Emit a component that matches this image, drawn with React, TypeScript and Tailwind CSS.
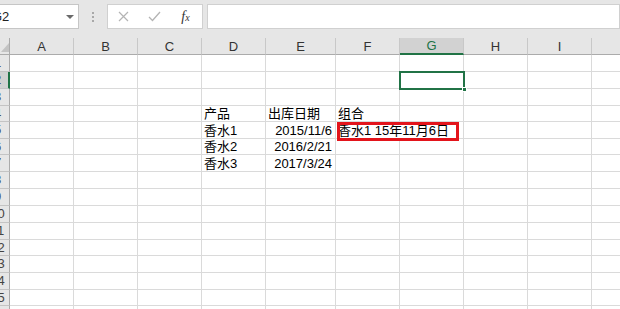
import type { ReactNode } from 'react';

const COLS = [
  { k: 'A', w: 'w-[64px]' },
  { k: 'B', w: 'w-[64px]' },
  { k: 'C', w: 'w-[64px]' },
  { k: 'D', w: 'w-[64px]' },
  { k: 'E', w: 'w-[70px]' },
  { k: 'F', w: 'w-[64px]' },
  { k: 'G', w: 'w-[64px]' },
  { k: 'H', w: 'w-[64px]' },
  { k: 'I', w: 'w-[64px]' },
  { k: 'J', w: 'w-[64px]' },
];

// row heights drift between 16 and 17px like the real sheet
const ROW_H = [
  'h-[17px]', 'h-[17px]', 'h-[17px]', 'h-[16px]', 'h-[17px]', 'h-[16px]', 'h-[17px]', 'h-[17px]',
  'h-[17px]', 'h-[17px]', 'h-[17px]', 'h-[16px]', 'h-[17px]', 'h-[17px]', 'h-[16px]', 'h-[17px]',
];

const CELLS: Record<string, { text: string; right?: boolean; spill?: boolean }> = {
  D4: { text: '产品' },
  E4: { text: '出库日期' },
  F4: { text: '组合' },
  D5: { text: '香水1' },
  E5: { text: '2015/11/6', right: true },
  F5: { text: '香水1 15年11月6日', spill: true },
  D6: { text: '香水2' },
  E6: { text: '2016/2/21', right: true },
  D7: { text: '香水3' },
  E7: { text: '2017/3/24', right: true },
};

const FONT = "font-['Liberation_Sans','Noto_Sans_CJK_SC',sans-serif]";

export default function App() {
  return (
    <div className={`relative w-[620px] h-[309px] overflow-hidden bg-white ${FONT}`}>
      {/* Formula bar */}
      <div className="flex h-[38px] items-start bg-[#e6e6e6] pt-[4px]">
        <div className="ml-[-10px] flex h-[25px] w-[89px] items-center border border-[#c6c6c6] bg-white pl-[1px] pr-[4px]">
          <span className="flex-1 text-[13px] text-[#222]">G2</span>
          <span className="h-0 w-0 border-x-[4px] border-t-[4px] border-x-transparent border-t-[#6a6a6a]" />
        </div>
        <div className="flex h-[25px] w-[28px] flex-col items-center justify-center gap-[2px]">
          <span className="h-[2px] w-[2px] bg-[#a8a8a8]" />
          <span className="h-[2px] w-[2px] bg-[#a8a8a8]" />
          <span className="h-[2px] w-[2px] bg-[#a8a8a8]" />
        </div>
        <div className="flex h-[25px] w-[96px] items-center border border-[#d0d0d0] bg-white">
          <IconBtn>
            <svg width="11" height="11" viewBox="0 0 11 11" className="stroke-[#b4b4b4]">
              <path d="M1 1 L10 10 M10 1 L1 10" strokeWidth="1.2" fill="none" />
            </svg>
          </IconBtn>
          <IconBtn>
            <svg width="13" height="11" viewBox="0 0 13 11" className="stroke-[#b4b4b4]">
              <path d="M1 6 L4.5 9.5 L12 1" strokeWidth="1.3" fill="none" />
            </svg>
          </IconBtn>
          <IconBtn>
            <span className="font-['Liberation_Serif',serif] text-[14px] italic text-[#333]">
              f<span className="text-[10px]">x</span>
            </span>
          </IconBtn>
        </div>
        <div className="ml-[4px] h-[25px] flex-1 border border-[#d0d0d0] bg-white" />
      </div>

      {/* Column headers */}
      <div className="flex h-[17px]">
        <div className="flex w-[10px] shrink-0 items-end justify-end border-b border-r border-[#ababab] bg-[#e6e6e6] pb-[2px]">
          <svg width="8" height="9" viewBox="0 0 8 9">
            <path d="M8 0 L8 9 L0 9 Z" fill="#c4c4c4" />
          </svg>
        </div>
        {COLS.map(c => (
          <div
            key={c.k}
            className={`${c.w} shrink-0 flex items-center justify-center border-r text-[13px] leading-none ${
              c.k === 'G'
                ? 'border-b-2 border-r-[#c8c8c8] border-b-[#217346] bg-[#d2d2d2] text-[#217346]'
                : 'border-b border-r-[#c8c8c8] border-b-[#ababab] bg-[#e6e6e6] text-[#333]'
            }`}
          >
            {c.k}
          </div>
        ))}
      </div>

      {/* Rows */}
      {ROW_H.map((h, i) => {
        const row = i + 1;
        return (
          <div key={row} className={`flex ${h}`}>
            <div
              className={`w-[10px] shrink-0 overflow-hidden border-b border-[#c4c4c4] ${
                row === 2 ? 'border-r-2 border-r-[#217346] bg-[#d2d2d2]' : 'border-r border-r-[#ababab] bg-[#e6e6e6]'
              }`}
            >
              <div className="ml-[-15px] w-[25px] text-center text-[13px] leading-[16px] text-[#444]">{row}</div>
            </div>
            {COLS.map(c => {
              const cell = CELLS[`${c.k}${row}`];
              return (
                <div
                  key={c.k}
                  className={`${c.w} shrink-0 flex items-end border-b border-[#dadada] px-[2px] text-[13px] leading-[15px] text-black ${
                    cell?.spill ? 'relative z-10' : 'border-r'
                  } ${cell?.right ? 'justify-end pr-[3px]' : ''}`}
                >
                  {cell && <span className="whitespace-nowrap">{cell.text}</span>}
                </div>
              );
            })}
          </div>
        );
      })}

      {/* Active cell G2 */}
      <div className="absolute left-[399px] top-[71px] h-[19px] w-[66px] border-2 border-[#217346]" />
      <div className="absolute left-[462px] top-[87px] h-[5px] w-[5px] border border-white bg-[#217346]" />

      {/* Red annotation box */}
      <div className="absolute left-[337px] top-[122px] z-20 h-[19px] w-[122px] border-[3px] border-[#e3141b]" />
    </div>
  );
}

function IconBtn({ children }: { children: ReactNode }) {
  return <div className="flex h-full w-[31px] items-center justify-center">{children}</div>;
}
